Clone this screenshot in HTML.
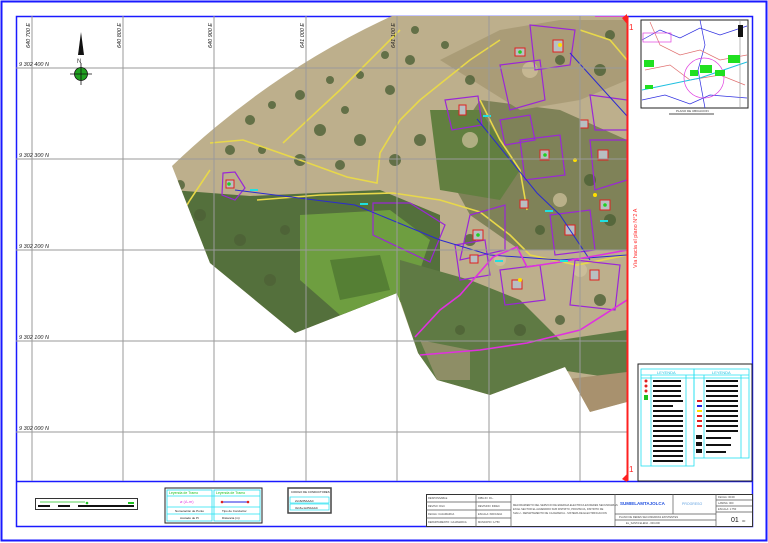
<!DOCTYPE html>
<html><head><meta charset="utf-8"><style>
html,body{margin:0;padding:0;background:#fff;}
svg{display:block;font-family:"Liberation Sans",sans-serif;}
</style></head><body>
<svg width="768" height="543" viewBox="0 0 768 543" xmlns="http://www.w3.org/2000/svg">
<defs>
<clipPath id="mp"><path d="M172,166 Q270,72 392,16 L627,16 L627,402 L590,412 L565,367 L490,395 L437,380 L418,353 L397,293 L295,333 L210,263 Z"/></clipPath>
</defs>
<rect x="0" y="0" width="768" height="543" fill="#fff"/>
<rect x="1.5" y="1.5" width="765" height="539" fill="none" stroke="#1a1aff" stroke-width="2"/>
<rect x="16.5" y="16.5" width="736" height="510" fill="none" stroke="#1a1aff" stroke-width="1.5"/>
<line x1="16" y1="481.5" x2="752" y2="481.5" stroke="#1a1aff" stroke-width="1.5"/>

<g clip-path="url(#mp)">
<rect x="160" y="10" width="470" height="410" fill="#bdaf8c"/>
<path d="M172,190 L250,196 L380,190 L440,215 L440,300 L395,300 L295,335 L200,270 Z" fill="#54703c"/>
<path d="M300,215 L390,210 L430,240 L410,300 L340,315 L300,280 Z" fill="#6e9e40"/>
<path d="M330,260 L380,255 L390,290 L340,300 Z" fill="#557f34"/>
<path d="M400,260 L470,280 L520,300 L560,340 L627,330 L627,380 L560,370 L490,395 L437,380 L418,353 L400,300 Z" fill="#5f7a44"/>
<path d="M420,340 L470,350 L470,380 L437,380 Z" fill="#8e8e66"/>
<path d="M560,380 L627,372 L627,402 L590,412 Z" fill="#a8916e"/>
<path d="M480,100 L560,110 L627,140 L627,250 L520,250 L470,215 L440,160 Z" fill="#7f8258"/>
<path d="M440,60 L500,30 L560,20 L627,20 L627,80 L580,100 L520,110 Z" fill="#aa9c77"/>
<path d="M430,110 L480,110 L520,170 L500,200 L440,190 Z" fill="#627f40"/>
<g fill="#4d6136" opacity="0.8">
<circle cx="250" cy="120" r="5"/><circle cx="272" cy="105" r="4"/><circle cx="300" cy="95" r="5"/><circle cx="320" cy="130" r="6"/><circle cx="345" cy="110" r="4"/><circle cx="360" cy="140" r="6"/><circle cx="390" cy="90" r="5"/><circle cx="410" cy="60" r="5"/><circle cx="385" cy="55" r="4"/><circle cx="360" cy="75" r="4"/><circle cx="330" cy="80" r="4"/><circle cx="230" cy="150" r="5"/><circle cx="262" cy="150" r="4"/><circle cx="300" cy="160" r="6"/><circle cx="340" cy="165" r="5"/><circle cx="395" cy="160" r="6"/><circle cx="420" cy="140" r="6"/><circle cx="415" cy="30" r="4"/><circle cx="445" cy="45" r="4"/><circle cx="470" cy="80" r="5"/><circle cx="560" cy="60" r="5"/><circle cx="600" cy="70" r="6"/><circle cx="610" cy="35" r="5"/><circle cx="590" cy="180" r="6"/><circle cx="610" cy="220" r="6"/><circle cx="540" cy="230" r="5"/><circle cx="470" cy="240" r="6"/><circle cx="600" cy="300" r="6"/><circle cx="560" cy="320" r="5"/><circle cx="520" cy="330" r="6"/><circle cx="460" cy="330" r="5"/><circle cx="180" cy="185" r="5"/><circle cx="200" cy="215" r="6"/><circle cx="240" cy="240" r="6"/><circle cx="270" cy="280" r="6"/><circle cx="285" cy="230" r="5"/>
</g>
<g fill="#d2c39e" opacity="0.7">
<circle cx="470" cy="140" r="8"/><circle cx="560" cy="200" r="7"/><circle cx="500" cy="260" r="6"/><circle cx="580" cy="270" r="7"/><circle cx="530" cy="70" r="8"/>
</g>
<g fill="none" stroke="#e8d84a" stroke-width="1.6">
<path d="M257,200 L320,195 L393,193 L440,200 L480,212 L510,235 L530,255 L577,265 L627,255"/>
<path d="M210,143 L243,140 L300,160 L347,177 L377,183 L380,153 L400,120 L420,100 L470,60 L500,40"/>
<path d="M400,30 L340,90 L283,143"/>
<path d="M480,100 L500,140 L520,170 L527,210"/>
<path d="M580,30 L610,40 L627,60"/>
<path d="M172,230 L190,200 L210,170"/>
</g>
<g fill="none" stroke="#9a27d6" stroke-width="1.2">
<path d="M223,173 L235,172 L245,188 L235,200 L222,195 Z"/>
<path d="M373,203 L410,203 L445,225 L430,262 L373,235 Z"/>
<path d="M445,100 L478,96 L482,125 L452,130 Z"/>
<path d="M500,65 L540,60 L545,100 L510,110 Z"/>
<path d="M530,25 L575,30 L570,65 L535,70 Z"/>
<path d="M470,215 L505,205 L505,250 L460,260 Z"/>
<path d="M500,270 L540,265 L545,300 L505,305 Z"/>
<path d="M550,215 L590,210 L595,250 L555,255 Z"/>
<path d="M590,140 L627,140 L627,180 L595,190 Z"/>
<path d="M520,140 L560,135 L565,175 L525,180 Z"/>
<path d="M575,260 L620,265 L615,310 L570,305 Z"/>
<path d="M455,245 L485,240 L490,275 L460,280 Z"/>
<path d="M590,95 L627,100 L627,130 L595,130 Z"/>
<path d="M500,120 L530,115 L535,140 L505,145 Z"/>
</g>
<g fill="#b8bfc2" stroke="#e02020" stroke-width="1">
<rect x="226" y="180" width="8" height="8"/><rect x="459" y="105" width="7" height="10"/><rect x="515" y="48" width="10" height="8"/><rect x="553" y="40" width="10" height="12"/>
<rect x="473" y="230" width="10" height="10"/><rect x="512" y="280" width="10" height="9"/><rect x="565" y="225" width="10" height="10"/><rect x="598" y="150" width="10" height="10"/>
<rect x="540" y="150" width="9" height="10"/><rect x="590" y="270" width="9" height="10"/><rect x="600" y="200" width="10" height="10"/><rect x="470" y="255" width="8" height="8"/><rect x="520" y="200" width="8" height="8"/><rect x="580" y="120" width="8" height="8"/>
</g>
<g fill="none" stroke="#2b2bd0" stroke-width="1">
<path d="M235,190 L355,205 L440,240 L490,255 L560,260 L627,255"/>
<path d="M477,119 L537,193 L560,215 L590,260"/>
<path d="M570,53 L627,116"/>
</g>
<g fill="none" stroke="#e030e0" stroke-width="1.6">
<path d="M415,337 L440,310 L460,295 L493,257 L517,247 L527,267 L560,262 L600,255 L627,250"/>
<path d="M420,355 L480,350 L527,343 L580,330 L627,300"/>
<path d="M595,16 L627,16"/>
</g>
<g fill="#20e0e0">
<rect x="250" y="189" width="8" height="2"/><rect x="360" y="203" width="8" height="2"/><rect x="483" y="115" width="8" height="2"/><rect x="545" y="210" width="8" height="2"/><rect x="600" y="220" width="8" height="2"/><rect x="560" y="260" width="8" height="2"/><rect x="495" y="260" width="8" height="2"/>
</g>
<g fill="#ffe000"><circle cx="595" cy="195" r="2"/><circle cx="575" cy="160" r="2"/><circle cx="520" cy="280" r="2"/><circle cx="560" cy="45" r="2"/></g>
<g fill="#20d020"><circle cx="229" cy="184" r="1.8"/><circle cx="520" cy="52" r="1.8"/><circle cx="478" cy="235" r="1.8"/><circle cx="605" cy="205" r="1.8"/><circle cx="545" cy="155" r="1.8"/></g>
</g>

<g stroke="#9a9a9a" stroke-width="1">
<line x1="32" y1="16" x2="32" y2="481"/><line x1="123" y1="16" x2="123" y2="481"/><line x1="214" y1="16" x2="214" y2="481"/><line x1="306" y1="16" x2="306" y2="481"/><line x1="397" y1="16" x2="397" y2="481"/><line x1="489" y1="16" x2="489" y2="481"/><line x1="580" y1="16" x2="580" y2="481"/>
<line x1="16" y1="68" x2="627" y2="68"/><line x1="16" y1="159" x2="627" y2="159"/><line x1="16" y1="250" x2="627" y2="250"/><line x1="16" y1="341" x2="627" y2="341"/><line x1="16" y1="432" x2="627" y2="432"/>
</g>
<g font-size="5.5" font-style="italic" fill="#222">
<text transform="translate(30,48) rotate(-90)">640 700 E</text>
<text transform="translate(121,48) rotate(-90)">640 800 E</text>
<text transform="translate(212,48) rotate(-90)">640 900 E</text>
<text transform="translate(304,48) rotate(-90)">641 000 E</text>
<text transform="translate(395,48) rotate(-90)">641 100 E</text>
<text x="19" y="66">9 302 400 N</text>
<text x="19" y="157">9 302 300 N</text>
<text x="19" y="248">9 302 200 N</text>
<text x="19" y="339">9 302 100 N</text>
<text x="19" y="430">9 302 000 N</text>
</g>
<path d="M81,32 L78,55 L84,55 Z" fill="#111"/>
<text x="77" y="63" font-size="6" fill="#333">N</text>
<circle cx="81" cy="74" r="6.5" fill="#1fa01f" stroke="#111" stroke-width="0.8"/>
<path d="M70,74 L92,74 M81,63 L81,85" stroke="#111" stroke-width="0.8"/>

<line x1="627.5" y1="16" x2="627.5" y2="481" stroke="#ff2020" stroke-width="2"/>
<text x="629" y="30" font-size="8" fill="#ff2020">1</text>
<text x="629" y="472" font-size="8" fill="#ff2020">1</text>
<path d="M622,18 L627,14 L627,24 Z M622,479 L627,474 L627,482 Z" fill="#ff2020"/>
<text transform="translate(637,268) rotate(-90)" font-size="5.5" fill="#ff3030">Vía hacia el plano N°2 A</text>

<rect x="641" y="20" width="107" height="88" fill="#fff" stroke="#222" stroke-width="1"/>
<g fill="none" stroke-width="0.7">
<path d="M642,40 L660,30 L680,38 L700,28 L720,35 L747,26" stroke="#3030e0"/>
<path d="M642,100 L665,95 L690,104 L710,95 L747,98" stroke="#3030e0"/>
<path d="M700,20 L705,45 L698,70 L705,108" stroke="#3030e0"/>
<path d="M650,22 L660,45 L680,55 L700,50 L720,60 L747,55" stroke="#e07070"/>
<path d="M645,70 L670,65 L690,80 L720,75 L745,85" stroke="#e07070"/>
<path d="M642,90 L700,78 L747,62" stroke="#20c0e0" stroke-width="1"/>
<circle cx="704" cy="78" r="20" stroke="#e040e0"/>
<line x1="740" y1="20" x2="740" y2="108" stroke="#999"/>
</g>
<rect x="643" y="33" width="28" height="9" fill="none" stroke="#e040e0" stroke-width="0.7"/>
<g fill="#20e020"><rect x="644" y="60" width="10" height="7"/><rect x="700" y="65" width="12" height="8"/><rect x="715" y="70" width="10" height="6"/><rect x="728" y="55" width="12" height="8"/><rect x="690" y="70" width="8" height="6"/><rect x="645" y="85" width="8" height="4"/></g>
<rect x="738" y="25" width="5" height="12" fill="#111"/>
<line x1="669" y1="114" x2="714" y2="114" stroke="#111" stroke-width="0.8"/>
<text x="676" y="112" font-size="3" fill="#333">PLANO DE UBICACION</text>

<rect x="638" y="364" width="114" height="117" fill="#fff" stroke="#222" stroke-width="1"/>
<g stroke="#20e0f0" stroke-width="0.8" fill="none">
<rect x="641" y="369" width="53" height="97"/>
<rect x="694" y="369" width="55" height="89"/>
<line x1="641" y1="375" x2="749" y2="375"/><line x1="641" y1="378" x2="749" y2="378"/>
<line x1="651" y1="375" x2="651" y2="466"/><line x1="686" y1="375" x2="686" y2="466"/>
<line x1="704" y1="375" x2="704" y2="458"/><line x1="741" y1="375" x2="741" y2="458"/>
</g>
<text x="657" y="374" font-size="4" fill="#20c0e0">LEYENDA</text>
<text x="712" y="374" font-size="4" fill="#20c0e0">LEYENDA</text>
<g fill="#111">
<rect x="653" y="380" width="28" height="2"/><rect x="653" y="385" width="28" height="2"/><rect x="653" y="390" width="28" height="2"/><rect x="653" y="395" width="28" height="2"/><rect x="653" y="400" width="30" height="2"/><rect x="653" y="405" width="20" height="2"/><rect x="653" y="410" width="30" height="2"/><rect x="653" y="415" width="30" height="2"/><rect x="653" y="420" width="30" height="2"/><rect x="653" y="425" width="30" height="2"/><rect x="653" y="430" width="30" height="2"/><rect x="653" y="435" width="30" height="2"/><rect x="653" y="440" width="30" height="2"/><rect x="653" y="445" width="30" height="2"/><rect x="653" y="450" width="30" height="2"/><rect x="653" y="455" width="30" height="2"/><rect x="653" y="460" width="30" height="2"/>
<rect x="706" y="380" width="32" height="2"/><rect x="706" y="385" width="32" height="2"/><rect x="706" y="390" width="32" height="2"/><rect x="706" y="395" width="32" height="2"/><rect x="706" y="400" width="32" height="2"/><rect x="706" y="405" width="32" height="2"/><rect x="706" y="410" width="32" height="2"/><rect x="706" y="415" width="32" height="2"/><rect x="706" y="420" width="32" height="2"/><rect x="706" y="425" width="32" height="2"/><rect x="706" y="430" width="32" height="2"/><rect x="706" y="437" width="25" height="2"/><rect x="706" y="444" width="25" height="2"/><rect x="706" y="451" width="20" height="2"/>
<rect x="696" y="435" width="6" height="4"/><rect x="696" y="442" width="6" height="4"/><rect x="696" y="449" width="6" height="4"/>
</g>
<g fill="#e02020"><circle cx="646" cy="381" r="1.5"/><circle cx="646" cy="386" r="1.5"/><circle cx="646" cy="391" r="1.5"/><rect x="644" y="395" width="4" height="5" fill="#20c020"/><rect x="697" y="400" width="5" height="2"/><rect x="697" y="415" width="5" height="2"/><rect x="697" y="420" width="5" height="2"/><rect x="697" y="425" width="5" height="2"/></g>
<rect x="697" y="405" width="5" height="2" fill="#2020e0"/><rect x="697" y="410" width="5" height="2" fill="#ffe000"/>

<rect x="35.5" y="498.5" width="102" height="11" fill="#fff" stroke="#333" stroke-width="1"/>
<rect x="38" y="505" width="96" height="2" fill="#111"/>
<rect x="50" y="505" width="8" height="2" fill="#fff"/><rect x="70" y="505" width="8" height="2" fill="#fff"/>
<line x1="40" y1="502" x2="85" y2="502" stroke="#20c020" stroke-width="0.8"/>
<circle cx="87" cy="503" r="1.3" fill="#20c020"/><rect x="128" y="502" width="6" height="2" fill="#20c020"/>

<rect x="165" y="488" width="97" height="35" fill="#fff" stroke="#222" stroke-width="1"/>
<g stroke="#20e0f0" stroke-width="0.8" fill="none">
<rect x="167" y="490" width="45" height="31"/><rect x="214" y="490" width="46" height="31"/>
<line x1="167" y1="496" x2="260" y2="496"/><line x1="167" y1="507" x2="260" y2="507"/><line x1="167" y1="514" x2="260" y2="514"/>
</g>
<text x="169" y="494" font-size="3.5" fill="#20c020">Leyenda de Tramo</text>
<text x="216" y="494" font-size="3.5" fill="#20c020">Leyenda de Tramo</text>
<text x="180" y="503" font-size="4" fill="#e040e0">ø (Δ-m)</text>
<line x1="222" y1="502" x2="248" y2="502" stroke="#2020e0" stroke-width="1"/>
<circle cx="222" cy="502" r="1.3" fill="#e02020"/><circle cx="248" cy="502" r="1.3" fill="#e02020"/>
<text x="175" y="512" font-size="3" fill="#111">Numeración de Punto</text>
<text x="180" y="519" font-size="3" fill="#111">Acotado de Pt</text>
<text x="222" y="512" font-size="3" fill="#111">Tipo de Conductor</text>
<text x="222" y="519" font-size="3" fill="#111">Distancia (m)</text>

<rect x="288" y="488" width="43" height="25" fill="#fff" stroke="#444" stroke-width="1.5"/>
<g stroke="#20e0f0" stroke-width="0.7" fill="none"><rect x="290" y="497" width="39" height="6"/><rect x="290" y="504" width="39" height="6"/></g>
<text x="291" y="493" font-size="2.8" fill="#111">CODIGO DE CONDUCTORES</text>
<text x="295" y="502" font-size="3" fill="#111">2x16/25AAAC</text>
<text x="295" y="509" font-size="3" fill="#111">3x16+1x25AAAC</text>

<rect x="426.5" y="494.5" width="326" height="32" fill="#fff" stroke="#333" stroke-width="1"/>
<g stroke="#555" stroke-width="0.7" fill="none">
<line x1="476" y1="494" x2="476" y2="527"/><line x1="511" y1="494" x2="511" y2="527"/><line x1="615" y1="494" x2="615" y2="527"/><line x1="716" y1="494" x2="716" y2="527"/>
<line x1="426" y1="502" x2="511" y2="502"/><line x1="426" y1="510" x2="511" y2="510"/><line x1="426" y1="518" x2="511" y2="518"/>
<line x1="615" y1="514" x2="716" y2="514"/><line x1="615" y1="520" x2="716" y2="520"/><line x1="673" y1="494" x2="673" y2="514"/>
<line x1="716" y1="500" x2="752" y2="500"/><line x1="716" y1="506" x2="752" y2="506"/><line x1="716" y1="512" x2="752" y2="512"/>
</g>
<g font-size="2.6" fill="#444">
<text x="428" y="499">RESPONSABLE</text><text x="478" y="499">DIBUJO: R.L.</text>
<text x="428" y="507">REVISO: DGC</text><text x="478" y="507">REVISION: INDEC</text>
<text x="428" y="515">FECHA: CAJAMARCA</text><text x="478" y="515">ESCALA: INDICADA</text>
<text x="428" y="523">DEPARTAMENTO: CAJAMARCA</text><text x="478" y="523">MUNICIPIO: 1/750</text>
<text x="513" y="506">MEJORAMIENTO DEL SERVICIO DE ENERGIA ELECTRICA EN REDES SECUNDARIAS</text>
<text x="513" y="510">EN EL SECTOR EL ALMENDRO SUB DISTRITO, PROVINCIA, DISTRITO DE</text>
<text x="513" y="514">SIALU - DEPARTAMENTO DE CAJAMARCA - SISTEMA DE ELECTRIFICACION</text>
<text x="619" y="518">PLANO DE REDES SECUNDARIAS EXISTENTES</text>
<text x="626" y="524">EL_SANTA ELENA - 000-000</text>
<text x="718" y="498">FECHA: 00/00</text><text x="718" y="504">LAMINA: 000</text><text x="718" y="510">ESCALA: 1:750</text>
</g>
<text x="620" y="505" font-size="4.5" fill="#2050e0" font-weight="bold">SUMIELAMTAJOLCA</text>
<text x="682" y="505" font-size="3.5" fill="#60a0e0">PROGRESO</text>
<text x="731" y="522" font-size="7" fill="#111">01</text><text x="742" y="522" font-size="3" fill="#444">00</text>
</svg>
</body></html>
